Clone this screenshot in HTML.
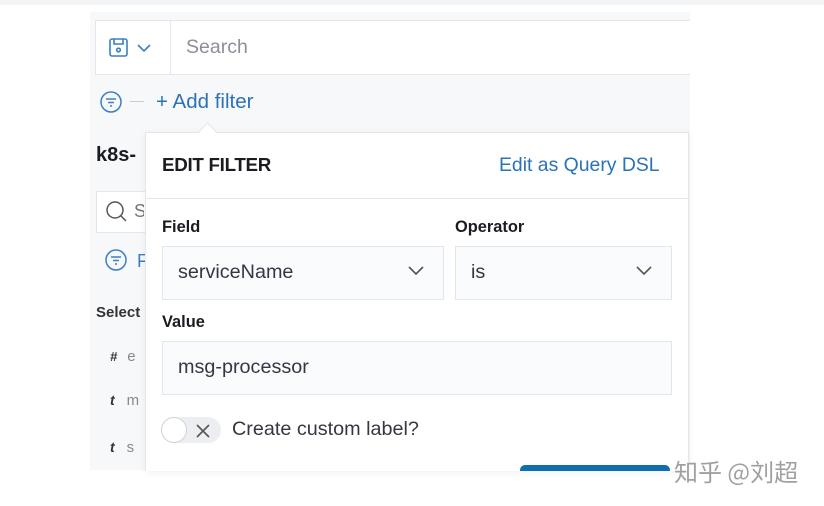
<!DOCTYPE html><html><head><style>
body{margin:0;width:824px;height:506px;background:#fff;position:relative;overflow:hidden;font-family:"Liberation Sans",Arial,sans-serif}
.a{position:absolute}
</style></head><body>
<div class="a" style="left:0;top:0;width:824px;height:5px;background:#f3f4f6"></div>
<div class="a" style="left:90px;top:12px;width:600px;height:458px;background:#f7f8fa;overflow:hidden">
<div class="a" style="left:5px;top:8px;width:620px;height:53px;background:#fff;border:1px solid #e3e6ea"></div>
</div>
<div class="a" style="left:170px;top:21px;width:1px;height:53px;background:#e3e6ea"></div>
<svg class="a" style="left:108px;top:37px" width="50" height="22" viewBox="0 0 50 22" fill="none" stroke="#3b7fc4" stroke-width="1.6"><rect x="2" y="2" width="17" height="17" rx="2"/><path d="M6 2v5h9V2"/><circle cx="10.5" cy="13" r="1.8"/><path d="M30 8l6 6 6-6"/></svg>
<div class="a" style="left:186px;top:36px;font-size:19.5px;color:#8a8f98">Search</div>
<svg class="a" style="left:99px;top:90px" width="25" height="25" viewBox="0 0 25 25" fill="none" stroke="#3b7fc4" stroke-width="1.5"><circle cx="12" cy="12" r="10"/><path d="M7 9h10M9 12.5h6M11 16h2"/></svg>
<div class="a" style="left:130px;top:101px;width:14px;height:1px;background:#ccc"></div>
<div class="a" style="left:156px;top:90px;font-size:20.5px;color:#2a73b6">+ Add filter</div>
<div class="a" style="left:96px;top:144px;font-size:20px;font-weight:bold;color:#1a1c21">k8s-</div>
<div class="a" style="left:96px;top:191px;width:60px;height:40px;background:#fff;border:1px solid #e3e6ea"></div>
<svg class="a" style="left:104px;top:199px" width="40" height="24" fill="none" stroke="#555" stroke-width="1.5"><circle cx="11" cy="11" r="8"/><path d="M17 17l5 5"/><text x="30" y="18" font-size="18" fill="#777" stroke="none">S</text></svg>
<svg class="a" style="left:104px;top:248px" width="45" height="25" fill="none" stroke="#3b7fc4" stroke-width="1.5"><circle cx="12" cy="12" r="10"/><path d="M7 9h10M9 12.5h6M11 16h2"/><text x="33" y="19" font-size="18" fill="#3b7fc4" stroke="none">F</text></svg>
<div class="a" style="left:96px;top:304px;font-size:15px;font-weight:bold;color:#333">Select</div>
<div class="a" style="left:110px;top:348px;font-size:13px;font-weight:bold;font-style:italic;color:#333">#<span style="margin-left:10px;font-weight:normal;font-style:normal;font-size:15px;color:#888">e</span></div>
<div class="a" style="left:110px;top:392px;font-size:14px;font-weight:bold;font-style:italic;color:#333">t<span style="margin-left:12px;font-weight:normal;font-style:normal;font-size:15px;color:#888">m</span></div>
<div class="a" style="left:110px;top:439px;font-size:14px;font-weight:bold;font-style:italic;color:#333">t<span style="margin-left:12px;font-weight:normal;font-style:normal;font-size:15px;color:#888">s</span></div>
<div class="a" style="left:687px;top:250px;width:2px;height:160px;background:#8fbfb0"></div>
<div class="a" style="left:145px;top:132px;width:542px;height:338px;background:#fff;border:1px solid #e3e6ea;border-bottom:none;box-shadow:0 2px 8px rgba(0,0,0,.06)"></div>
<div class="a" style="left:201px;top:125px;width:12px;height:12px;background:#fff;border-left:1px solid #e3e6ea;border-top:1px solid #e3e6ea;transform:rotate(45deg)"></div>
<div class="a" style="left:162px;top:154px;font-size:18.8px;font-weight:bold;color:#1a1c21;letter-spacing:-.3px">EDIT FILTER</div>
<div class="a" style="left:499px;top:154px;font-size:19.4px;color:#2a73b6">Edit as Query DSL</div>
<div class="a" style="left:146px;top:198px;width:542px;height:1px;background:#e3e6ea"></div>
<div class="a" style="left:162px;top:218px;font-size:16.4px;font-weight:bold;color:#1a1c21">Field</div>
<div class="a" style="left:455px;top:218px;font-size:16.4px;font-weight:bold;color:#1a1c21">Operator</div>
<div class="a" style="left:162px;top:246px;width:280px;height:52px;background:#fafbfd;border:1px solid #e3e6ea"></div>
<div class="a" style="left:178px;top:261px;font-size:19.8px;color:#343741">serviceName</div>
<svg class="a" style="left:407px;top:265px" width="18" height="12" fill="none" stroke="#555" stroke-width="1.6"><path d="M2 2l7 7 7-7"/></svg>
<div class="a" style="left:455px;top:246px;width:215px;height:52px;background:#fafbfd;border:1px solid #e3e6ea"></div>
<div class="a" style="left:471px;top:261px;font-size:19.8px;color:#343741">is</div>
<svg class="a" style="left:635px;top:265px" width="18" height="12" fill="none" stroke="#555" stroke-width="1.6"><path d="M2 2l7 7 7-7"/></svg>
<div class="a" style="left:162px;top:313px;font-size:16.4px;font-weight:bold;color:#1a1c21">Value</div>
<div class="a" style="left:162px;top:341px;width:508px;height:52px;background:#fafbfd;border:1px solid #e3e6ea"></div>
<div class="a" style="left:178px;top:356px;font-size:19.8px;color:#343741">msg-processor</div>
<div class="a" style="left:161px;top:417px;width:60px;height:26px;border-radius:13px;background:#eceef2"></div>
<div class="a" style="left:161px;top:417px;width:24px;height:24px;border-radius:13px;background:#fff;border:1px solid #cfd3da"></div>
<svg class="a" style="left:195px;top:423px" width="16" height="16" stroke="#555" stroke-width="1.6"><path d="M2 2l12 12M14 2L2 14"/></svg>
<div class="a" style="left:232px;top:418px;font-size:19.8px;color:#343741">Create custom label?</div>
<div class="a" style="left:520px;top:465px;width:150px;height:6px;border-radius:5px 5px 0 0;background:#0f6fae"></div>
<div class="a" style="left:674px;top:453px;font-size:24px;color:#a0a0a0;font-family:'Noto Sans CJK SC',sans-serif;text-shadow:0 0 2px #fff,0 0 2px #fff">知乎 @刘超</div>
</body></html>
